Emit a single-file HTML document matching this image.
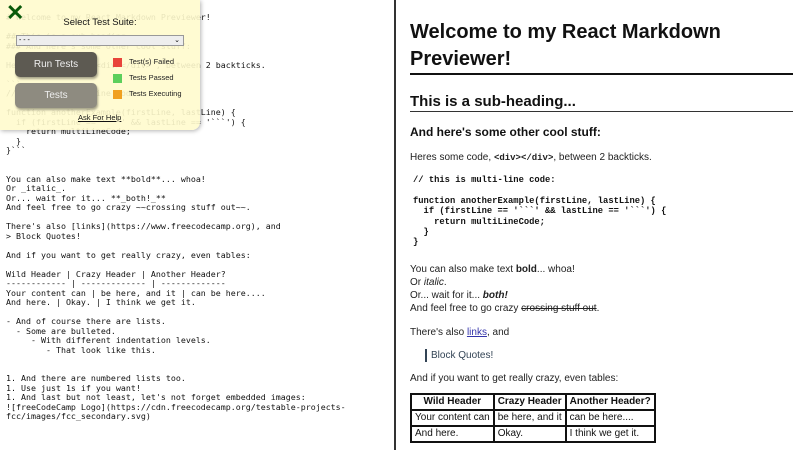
<!DOCTYPE html>
<html><head><meta charset="utf-8"><style>
*{box-sizing:border-box;margin:0;padding:0}
body{width:800px;height:450px;overflow:hidden;background:#fff;position:relative;font-family:"Liberation Sans",sans-serif}
#ed{position:absolute;left:0;top:0;width:396px;height:450px;border-right:2px solid #333;}
#ed pre{position:absolute;left:6px;top:13px;font-family:"DejaVu Sans Mono",monospace;font-size:8.3px;line-height:9.5px;color:#111;white-space:pre}
#pv{position:absolute;left:400px;top:0;width:400px;height:450px;padding:0 7px 0 10px;color:#111}
h1{font-size:20px;line-height:27px;font-weight:bold;margin-top:19px;border-bottom:2px solid #111}
h2{font-size:15px;line-height:18px;margin-top:18px;border-bottom:1px solid #333}
h3{font-size:12px;margin-top:12px;line-height:16px}
p{font-size:10px;line-height:13px;color:#222}
code{font-family:"Liberation Mono",monospace;font-weight:bold;font-size:9px}
#pv pre{font-family:"Liberation Mono",monospace;font-weight:bold;font-size:8.8px;line-height:10.4px;margin:10px 0 0 3px;color:#111}
blockquote{border-left:2px solid #345;padding-left:4px;margin:10px 0 0 15px;font-size:10px;color:#345;line-height:13px}
table{border-collapse:collapse;margin-top:8px;font-size:10px}
td,th{border:2px solid #111;padding:0 3px;height:16px;line-height:12px}
#ov{position:absolute;left:0;top:0;width:200px;height:130px;background:rgba(255,251,205,0.9);border-bottom-right-radius:8px;box-shadow:1px 1px 4px rgba(0,0,0,.3)}
.btn{position:absolute;left:15px;width:82px;height:25px;border-radius:5px;color:#eee;font-size:10px;text-align:center;line-height:25px;box-shadow:1px 2px 2px rgba(0,0,0,.35)}
.lg{position:absolute;left:113px;font-size:7.5px;color:#222}
.lg i{display:inline-block;width:9px;height:9px;vertical-align:middle;margin-right:7px}
</style></head><body>
<div id="ed"><pre># Welcome to my React Markdown Previewer!

## This is a sub-heading...
### And here's some other cool stuff:

Heres some code, &#96;&lt;div&gt;&lt;/div&gt;&#96;, between 2 backticks.

&#96;&#96;&#96;
// this is multi-line code:

function anotherExample(firstLine, lastLine) {
  if (firstLine == '&#96;&#96;&#96;' &amp;&amp; lastLine == '&#96;&#96;&#96;') {
    return multiLineCode;
  }
}&#96;&#96;&#96;


You can also make text **bold**... whoa!
Or _italic_.
Or... wait for it... **_both!_**
And feel free to go crazy ~~crossing stuff out~~.

There's also [links](https://www.freecodecamp.org), and
&gt; Block Quotes!

And if you want to get really crazy, even tables:

Wild Header | Crazy Header | Another Header?
------------ | ------------- | -------------
Your content can | be here, and it | can be here....
And here. | Okay. | I think we get it.

- And of course there are lists.
  - Some are bulleted.
     - With different indentation levels.
        - That look like this.


1. And there are numbered lists too.
1. Use just 1s if you want!
1. And last but not least, let's not forget embedded images:
![freeCodeCamp Logo](https://cdn.freecodecamp.org/testable-projects-
fcc/images/fcc_secondary.svg)</pre></div>
<div id="pv">
<h1>Welcome to my React Markdown Previewer!</h1>
<h2>This is a sub-heading...</h2>
<h3>And here's some other cool stuff:</h3>
<p style="margin-top:11px">Heres some code, <code>&lt;div&gt;&lt;/div&gt;</code>, between 2 backticks.</p>
<pre>// this is multi-line code:

function anotherExample(firstLine, lastLine) {
  if (firstLine == '&#96;&#96;&#96;' &amp;&amp; lastLine == '&#96;&#96;&#96;') {
    return multiLineCode;
  }
}</pre>
<p style="margin-top:15px">You can also make text <b>bold</b>... whoa!<br>Or <i>italic</i>.<br>Or... wait for it... <b><i>both!</i></b><br>And feel free to go crazy <s>crossing stuff out</s>.</p>
<p style="margin-top:11px">There's also <a href="#" style="color:#33a">links</a>, and</p>
<blockquote>Block Quotes!</blockquote>
<p style="margin-top:10px">And if you want to get really crazy, even tables:</p>
<table><tr><th>Wild Header</th><th>Crazy Header</th><th>Another Header?</th></tr>
<tr><td>Your content can</td><td>be here, and it</td><td>can be here....</td></tr>
<tr><td>And here.</td><td>Okay.</td><td>I think we get it.</td></tr></table>
</div>
<div id="ov">
<div style="position:absolute;left:6px;top:0px;font-size:22px;font-weight:bold;color:#0a5a0a">✕</div>
<div style="position:absolute;left:0;width:200px;top:17px;text-align:center;font-size:9.5px;color:#111">Select Test Suite:</div>
<div style="position:absolute;left:16px;top:35px;width:168px;height:11px;background:#eee;border:1px solid #999;font-size:7px;line-height:9px;padding-left:2px">- - -<span style="position:absolute;right:3px;font-size:7px">⌄</span></div>
<div class="btn" style="top:52px;background:#5d5a52">Run Tests</div>
<div class="btn" style="top:83px;background:#8e8b80">Tests</div>
<div class="lg" style="top:57px"><i style="background:#e8443a"></i>Test(s) Failed</div>
<div class="lg" style="top:73px"><i style="background:#5ccf5c"></i>Tests Passed</div>
<div class="lg" style="top:89px"><i style="background:#f0a020"></i>Tests Executing</div>
<div style="position:absolute;left:78px;top:113px;font-size:7.5px;text-decoration:underline;color:#111">Ask For Help</div>
</div>
</body></html>
